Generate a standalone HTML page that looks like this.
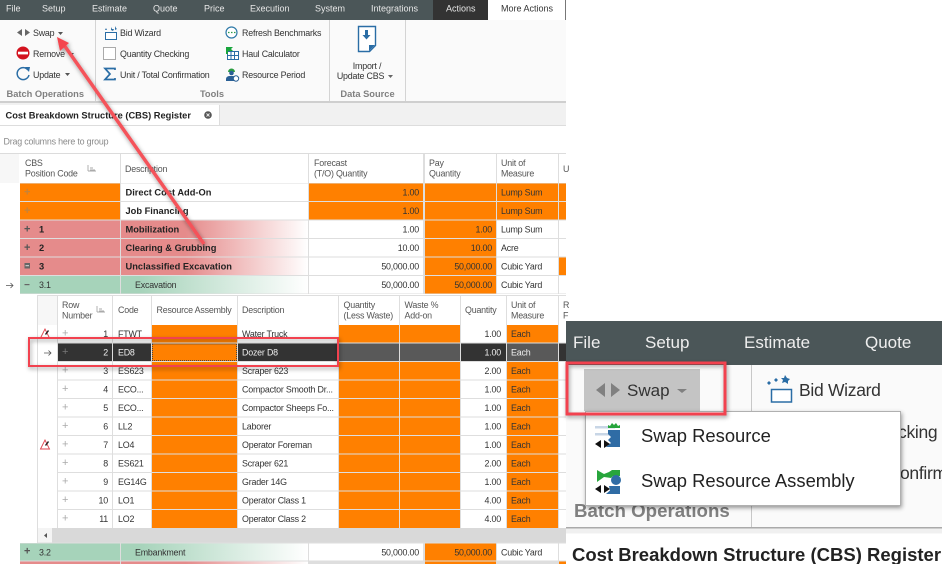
<!DOCTYPE html>
<html><head><meta charset="utf-8"><title>CBS Register</title>
<style>
html,body{margin:0;padding:0;background:#fff;width:942px;height:564px;overflow:hidden}
svg{display:block;position:absolute;left:0;top:0;filter:blur(.35px)}
text{font-family:"Liberation Sans",sans-serif;font-size:8.9px;letter-spacing:-.2px;fill:#333}
.t{fill:#e8e8e8;font-size:9px;letter-spacing:0}
.b{font-weight:bold;fill:#222;font-size:9.3px;letter-spacing:0}
.g{font-weight:bold;fill:#808080;font-size:9.3px;letter-spacing:0}
.h{fill:#555}
.e{text-anchor:end}
.m{text-anchor:middle}
.w{fill:#eee}
.p{fill:#aaa;font-size:11px;letter-spacing:0}
.d{fill:#555;font-size:11px;font-weight:bold;letter-spacing:0}
.i text{font-size:17px;letter-spacing:0}
</style></head><body>
<svg width="942" height="564" viewBox="0 0 942 564" xmlns="http://www.w3.org/2000/svg">
<defs>
<linearGradient id="rg" gradientUnits="userSpaceOnUse" x1="120" x2="308" y1="0" y2="0"><stop offset=".35" stop-color="#e58b8b"/><stop offset="1" stop-color="#fff"/></linearGradient>
<linearGradient id="gg" gradientUnits="userSpaceOnUse" x1="120" x2="308" y1="0" y2="0"><stop offset=".1" stop-color="#a6d3ba"/><stop offset="1" stop-color="#fff"/></linearGradient>
<filter id="sh" x="-10%" y="-20%" width="125%" height="150%"><feDropShadow dx="1" dy="2" stdDeviation="2" flood-color="#000" flood-opacity=".4"/></filter>
</defs>
<rect width="942" height="564" fill="#fff"/>

<!-- left: top bar -->
<rect x="0" y="0" width="565" height="20" fill="#4b5658"/>
<rect x="433" y="0" width="55" height="20" fill="#333"/>
<rect x="488" y="0" width="77" height="20" fill="#fff"/>
<rect x="565" y="0" width="1" height="20" fill="#777"/>
<text class="t" x="6" y="11.5">File</text>
<text class="t" x="42" y="11.5">Setup</text>
<text class="t" x="92" y="11.5">Estimate</text>
<text class="t" x="153" y="11.5">Quote</text>
<text class="t" x="204" y="11.5">Price</text>
<text class="t" x="250" y="11.5">Execution</text>
<text class="t" x="315" y="11.5">System</text>
<text class="t" x="371" y="11.5">Integrations</text>
<text class="t" x="446" y="11.5">Actions</text>
<text x="501" y="11.5" style="font-size:9px;letter-spacing:0">More Actions</text>

<!-- ribbon -->
<rect x="0" y="20" width="566" height="81" fill="#fafafa"/>
<rect x="0" y="101" width="566" height="2" fill="#cfcfcf"/>
<rect x="95" y="20" width="1" height="81" fill="#d4d4d4"/>
<rect x="329" y="20" width="1" height="81" fill="#d4d4d4"/>
<rect x="405" y="20" width="1" height="81" fill="#d4d4d4"/>
<path d="M22 29v7l-5-3.500zM25 29v7l5-3.500z" fill="#666"/>
<text x="33" y="36">Swap</text><path d="M58 32h5l-2.500 3z" fill="#555"/>
<circle cx="23" cy="53" r="6.500" fill="#d3121e"/><rect x="18" y="51.700" width="10" height="2.700" fill="#fff"/>
<text x="33" y="57">Remove</text><path d="M69 53h5l-2.500 3z" fill="#555"/>
<path d="M28 70a6 6 0 1 0 1 5" fill="none" stroke="#2a6da5" stroke-width="1.500"/><path d="M25 67l5 0-1 5z" fill="#2a6da5"/>
<text x="33" y="78">Update</text><path d="M65 73h5l-2.500 3z" fill="#555"/>
<text class="g" x="6.500" y="97">Batch Operations</text>
<rect x="105.500" y="32.500" width="11" height="7" fill="#fff" stroke="#2a6da5"/>
<path d="M106 28l1 2-2 0zM111 27l1 2 2 0-1 2-2-1zM115 26l1 2 1 1-2 1z" fill="#2a6da5"/>
<text x="120" y="36">Bid Wizard</text>
<rect x="103.500" y="47.500" width="12" height="12" fill="#fff" stroke="#aaa"/>
<text x="120" y="57">Quantity Checking</text>
<path d="M115 70v-1.500h-10l5 5.500-5 5.500h10v-1.500" fill="none" stroke="#2a6da5" stroke-width="1.700"/>
<text x="120" y="78">Unit / Total Confirmation</text>
<text class="g m" x="212" y="97">Tools</text>
<circle cx="231.500" cy="32.500" r="5.500" fill="#fff" stroke="#2f7aa8" stroke-width="1.200"/>
<path d="M228 32.500h1.500M231 32.500h1.500M234 32.500h1.500" stroke="#2c9c4a" stroke-width="1.200"/>
<text x="242" y="36">Refresh Benchmarks</text>
<rect x="227.500" y="51.500" width="11" height="8" fill="#fff" stroke="#2a6da5"/>
<path d="M231 52v7M234.500 52v7M228 55.500h10" stroke="#2a6da5"/>
<path d="M226 47h7l-2 2 2 2h-5v3h-2z" fill="#18a53c"/>
<text x="242" y="57">Haul Calculator</text>
<path d="M228 72a3.500 3.500 0 0 1 7 0z" fill="#2a9c3f"/><circle cx="231.500" cy="73" r="2.300" fill="#295f95"/>
<path d="M226 81v-2a3.500 3 0 0 1 3-3h4a3 3 0 0 1 3 3v2z" fill="#295f95"/>
<circle cx="236" cy="78.500" r="2.700" fill="#fff" stroke="#295f95"/>
<text x="242" y="78">Resource Period</text>
<path d="M358.500 26.500h17v19l-6 6h-11z" fill="#fff" stroke="#2a6da5" stroke-width="1.400"/>
<path d="M375 45l-6 6v-6z" fill="#2a6da5"/>
<path d="M365 30h3v5h2.500l-4 4.500-4-4.500h2.500z" fill="#2a6da5"/>
<text class="m" x="367" y="69">Import /</text>
<text class="m" x="360.500" y="79">Update CBS</text><path d="M388 75h5l-2.500 3z" fill="#666"/>
<text class="g m" x="367.500" y="97">Data Source</text>

<!-- tab strip -->
<rect x="0" y="103" width="566" height="22" fill="#f1f1f1"/>
<rect x="0" y="105" width="219" height="20" fill="#fff"/><rect x="219" y="105" width="1" height="20" fill="#ddd"/>
<text class="b" x="5.500" y="118.500">Cost Breakdown Structure (CBS) Register</text>
<circle cx="208" cy="115" r="3.800" fill="#555"/><path d="M206.500 113.500l3 3M209.500 113.500l-3 3" stroke="#eee" stroke-width=".9"/>
<rect x="0" y="125" width="566" height="1" fill="#ddd"/>
<text x="3.500" y="144.500" style="fill:#8a8a8a">Drag columns here to group</text>

<!-- main grid -->
<rect x="0" y="153" width="566" height="1" fill="#dcdcdc"/>
<rect x="20" y="154" width="546" height="410" fill="#dedede"/>
<rect x="0" y="154" width="19" height="410" fill="#fff"/>
<rect x="0" y="154" width="19" height="29" fill="#f7f7f7"/>
<rect x="20" y="154" width="100" height="29" fill="#fff"/>
<rect x="121" y="154" width="187" height="29" fill="#fff"/>
<rect x="309" y="154" width="114" height="29" fill="#fff"/>
<rect x="425" y="154" width="71" height="29" fill="#fff"/>
<rect x="497" y="154" width="61" height="29" fill="#fff"/>
<rect x="559" y="154" width="7" height="29" fill="#fff"/>
<text class="h" x="25" y="166">CBS</text><text class="h" x="25" y="176.500">Position Code</text>
<path d="M88 165v6M88 171h8M90 168h3M90 170h5" stroke="#aaa" stroke-width=".9"/>
<text class="h" x="125" y="172">Description</text>
<text class="h" x="314" y="166">Forecast</text><text class="h" x="314" y="176.500">(T/O) Quantity</text>
<text class="h" x="429" y="166">Pay</text><text class="h" x="429" y="176.500">Quantity</text>
<text class="h" x="501" y="166">Unit of</text><text class="h" x="501" y="176.500">Measure</text>
<text class="h" x="563" y="172">U</text>

<g transform="translate(0,183.500)">
<rect x="20" width="100" height="17.500" fill="#ff8000"/><rect x="121" width="187" height="17.500" fill="#fff"/><rect x="309" width="114" height="17.500" fill="#ff8000"/><rect x="425" width="71" height="17.500" fill="#ff8000"/><rect x="497" width="61" height="17.500" fill="#ff8000"/><rect x="559" width="7" height="17.500" fill="#ff8000"/>
<text class="d" x="24" y="12" style="fill:#c4833a">+</text><text class="b" x="125.500" y="12">Direct Cost Add-On</text><text class="e" x="419" y="12">1.00</text><text x="501" y="12">Lump Sum</text></g>
<g transform="translate(0,202)">
<rect x="20" width="100" height="17.500" fill="#ff8000"/><rect x="121" width="187" height="17.500" fill="#fff"/><rect x="309" width="114" height="17.500" fill="#ff8000"/><rect x="425" width="71" height="17.500" fill="#ff8000"/><rect x="497" width="61" height="17.500" fill="#ff8000"/><rect x="559" width="7" height="17.500" fill="#ff8000"/>
<text class="d" x="24" y="12" style="fill:#c4833a">+</text><text class="b" x="125.500" y="12">Job Financing</text><text class="e" x="419" y="12">1.00</text><text x="501" y="12">Lump Sum</text></g>
<g transform="translate(0,220.500)">
<rect x="20" width="100" height="17.500" fill="#e58b8b"/><rect x="121" width="187" height="17.500" fill="url(#rg)"/><rect x="309" width="114" height="17.500" fill="#fff"/><rect x="425" width="71" height="17.500" fill="#ff8000"/><rect x="497" width="61" height="17.500" fill="#fff"/><rect x="559" width="7" height="17.500" fill="#fff"/>
<text class="d" x="24" y="12">+</text><text class="b" x="39" y="12">1</text><text class="b" x="125.500" y="12">Mobilization</text><text class="e" x="419" y="12">1.00</text><text class="e" x="492" y="12">1.00</text><text x="501" y="12">Lump Sum</text></g>
<g transform="translate(0,239)">
<rect x="20" width="100" height="17.500" fill="#e58b8b"/><rect x="121" width="187" height="17.500" fill="url(#rg)"/><rect x="309" width="114" height="17.500" fill="#fff"/><rect x="425" width="71" height="17.500" fill="#ff8000"/><rect x="497" width="61" height="17.500" fill="#fff"/><rect x="559" width="7" height="17.500" fill="#fff"/>
<text class="d" x="24" y="12">+</text><text class="b" x="39" y="12">2</text><text class="b" x="125.500" y="12">Clearing &amp; Grubbing</text><text class="e" x="419" y="12">10.00</text><text class="e" x="492" y="12">10.00</text><text x="501" y="12">Acre</text></g>
<g transform="translate(0,257.500)">
<rect x="20" width="100" height="17.500" fill="#e58b8b"/><rect x="121" width="187" height="17.500" fill="url(#rg)"/><rect x="309" width="114" height="17.500" fill="#fff"/><rect x="425" width="71" height="17.500" fill="#ff8000"/><rect x="497" width="61" height="17.500" fill="#fff"/><rect x="559" width="7" height="17.500" fill="#ff8000"/>
<rect x="24.500" y="5.500" width="5.500" height="5.500" fill="#666"/><rect x="25.500" y="7.700" width="3.500" height="1" fill="#ddd"/>
<text class="b" x="39" y="12">3</text><text class="b" x="125.500" y="12">Unclassified Excavation</text><text class="e" x="419" y="12">50,000.00</text><text class="e" x="492" y="12">50,000.00</text><text x="501" y="12">Cubic Yard</text></g>
<g transform="translate(0,276)">
<path d="M6 9.500h7M10.500 7l2.500 2.500-2.500 2.500" fill="none" stroke="#555" stroke-width=".8"/>
<rect x="20" width="100" height="17.500" fill="#a6d3ba"/><rect x="121" width="187" height="17.500" fill="url(#gg)"/><rect x="309" width="114" height="17.500" fill="#fff"/><rect x="425" width="71" height="17.500" fill="#ff8000"/><rect x="497" width="61" height="17.500" fill="#fff"/><rect x="559" width="7" height="17.500" fill="#fff"/>
<rect x="24.500" y="8" width="5" height="1.200" fill="#666"/>
<text x="39" y="12">3.1</text><text x="135" y="12">Excavation</text><text class="e" x="419" y="12">50,000.00</text><text class="e" x="492" y="12">50,000.00</text><text x="501" y="12">Cubic Yard</text></g>

<!-- detail grid -->
<rect x="20" y="294" width="546" height="249" fill="#fff"/>
<rect x="37" y="295" width="529" height="248" fill="#dedede"/>
<rect x="38" y="296" width="19" height="232" fill="#fff"/>
<rect x="38" y="296" width="19" height="29" fill="#f7f7f7"/>
<rect x="58" y="296" width="54" height="29" fill="#fff"/>
<rect x="113" y="296" width="38" height="29" fill="#fff"/>
<rect x="152" y="296" width="85" height="29" fill="#fff"/>
<rect x="238" y="296" width="100" height="29" fill="#fff"/>
<rect x="339" y="296" width="60" height="29" fill="#fff"/>
<rect x="400" y="296" width="60" height="29" fill="#fff"/>
<rect x="461" y="296" width="45" height="29" fill="#fff"/>
<rect x="507" y="296" width="51" height="29" fill="#fff"/>
<rect x="559" y="296" width="7" height="29" fill="#fff"/>
<text class="h" x="62" y="308">Row</text><text class="h" x="62" y="318.500">Number</text>
<path d="M97 306v6M97 312h8M99 309h3M99 311h5" stroke="#aaa" stroke-width=".9"/>
<text class="h" x="118" y="313">Code</text>
<text class="h" x="156.500" y="313">Resource Assembly</text>
<text class="h" x="242" y="313">Description</text>
<text class="h" x="343.500" y="308">Quantity</text><text class="h" x="343.500" y="318.500">(Less Waste)</text>
<text class="h" x="404.500" y="308">Waste %</text><text class="h" x="404.500" y="318.500">Add-on</text>
<text class="h" x="465" y="313">Quantity</text>
<text class="h" x="511" y="308">Unit of</text><text class="h" x="511" y="318.500">Measure</text>
<text class="h" x="563" y="308">R</text><text class="h" x="563" y="318.500">F</text>

<g transform="translate(0,325)">
<rect x="58" width="54" height="17.500" fill="#fff"/><rect x="113" width="38" height="17.500" fill="#fff"/><rect x="152" width="85" height="17.500" fill="#ff8000"/><rect x="238" width="100" height="17.500" fill="#fff"/><rect x="339" width="60" height="17.500" fill="#ff8000"/><rect x="400" width="60" height="17.500" fill="#ff8000"/><rect x="461" width="45" height="17.500" fill="#fff"/><rect x="507" width="51" height="17.500" fill="#ff8000"/><rect x="559" width="7" height="17.500" fill="#fff"/>
<text class="p" x="62" y="11.500">+</text><text class="e" x="108" y="12">1</text><text x="118" y="12">FTWT</text><text x="242" y="12">Water Truck</text><text class="e" x="501" y="12">1.00</text><text x="511" y="12">Each</text>
<path d="M40.500 13l4.500-9 4.500 9z" fill="#fff" stroke="#e0434d" stroke-width=".9"/><path d="M45 9l3-4 1 1-3 4z" fill="#222"/></g>
<g transform="translate(0,343.500)">
<rect x="58" width="54" height="17.500" fill="#333"/><rect x="113" width="38" height="17.500" fill="#333"/><rect x="152" width="85" height="17.500" fill="#ff8000"/><rect x="152.500" y=".5" width="84" height="16.500" fill="none" stroke="#444" stroke-dasharray="1 1"/><rect x="238" width="100" height="17.500" fill="#333"/><rect x="339" width="60" height="17.500" fill="#595959"/><rect x="400" width="60" height="17.500" fill="#595959"/><rect x="461" width="45" height="17.500" fill="#333"/><rect x="507" width="51" height="17.500" fill="#595959"/><rect x="559" width="7" height="17.500" fill="#333"/>
<path d="M44 9.500h7M48.500 7l2.500 2.500-2.500 2.500" fill="none" stroke="#555" stroke-width=".8"/>
<text class="p" x="62" y="11.500" style="fill:#777">+</text><text class="e w" x="108" y="12">2</text><text class="w" x="118" y="12">ED8</text><text class="w" x="242" y="12">Dozer D8</text><text class="e w" x="501" y="12">1.00</text><text class="w" x="511" y="12">Each</text></g>
<g transform="translate(0,362)">
<rect x="58" width="54" height="17.500" fill="#fff"/><rect x="113" width="38" height="17.500" fill="#fff"/><rect x="152" width="85" height="17.500" fill="#ff8000"/><rect x="238" width="100" height="17.500" fill="#fff"/><rect x="339" width="60" height="17.500" fill="#ff8000"/><rect x="400" width="60" height="17.500" fill="#ff8000"/><rect x="461" width="45" height="17.500" fill="#fff"/><rect x="507" width="51" height="17.500" fill="#ff8000"/><rect x="559" width="7" height="17.500" fill="#fff"/>
<text class="p" x="62" y="11.500">+</text><text class="e" x="108" y="12">3</text><text x="118" y="12">ES623</text><text x="242" y="12">Scraper 623</text><text class="e" x="501" y="12">2.00</text><text x="511" y="12">Each</text></g>
<g transform="translate(0,380.500)">
<rect x="58" width="54" height="17.500" fill="#fff"/><rect x="113" width="38" height="17.500" fill="#fff"/><rect x="152" width="85" height="17.500" fill="#ff8000"/><rect x="238" width="100" height="17.500" fill="#fff"/><rect x="339" width="60" height="17.500" fill="#ff8000"/><rect x="400" width="60" height="17.500" fill="#ff8000"/><rect x="461" width="45" height="17.500" fill="#fff"/><rect x="507" width="51" height="17.500" fill="#ff8000"/><rect x="559" width="7" height="17.500" fill="#fff"/>
<text class="p" x="62" y="11.500">+</text><text class="e" x="108" y="12">4</text><text x="118" y="12">ECO...</text><text x="242" y="12">Compactor Smooth Dr...</text><text class="e" x="501" y="12">1.00</text><text x="511" y="12">Each</text></g>
<g transform="translate(0,399)">
<rect x="58" width="54" height="17.500" fill="#fff"/><rect x="113" width="38" height="17.500" fill="#fff"/><rect x="152" width="85" height="17.500" fill="#ff8000"/><rect x="238" width="100" height="17.500" fill="#fff"/><rect x="339" width="60" height="17.500" fill="#ff8000"/><rect x="400" width="60" height="17.500" fill="#ff8000"/><rect x="461" width="45" height="17.500" fill="#fff"/><rect x="507" width="51" height="17.500" fill="#ff8000"/><rect x="559" width="7" height="17.500" fill="#fff"/>
<text class="p" x="62" y="11.500">+</text><text class="e" x="108" y="12">5</text><text x="118" y="12">ECO...</text><text x="242" y="12">Compactor Sheeps Fo...</text><text class="e" x="501" y="12">1.00</text><text x="511" y="12">Each</text></g>
<g transform="translate(0,417.500)">
<rect x="58" width="54" height="17.500" fill="#fff"/><rect x="113" width="38" height="17.500" fill="#fff"/><rect x="152" width="85" height="17.500" fill="#ff8000"/><rect x="238" width="100" height="17.500" fill="#fff"/><rect x="339" width="60" height="17.500" fill="#ff8000"/><rect x="400" width="60" height="17.500" fill="#ff8000"/><rect x="461" width="45" height="17.500" fill="#fff"/><rect x="507" width="51" height="17.500" fill="#ff8000"/><rect x="559" width="7" height="17.500" fill="#fff"/>
<text class="p" x="62" y="11.500">+</text><text class="e" x="108" y="12">6</text><text x="118" y="12">LL2</text><text x="242" y="12">Laborer</text><text class="e" x="501" y="12">1.00</text><text x="511" y="12">Each</text></g>
<g transform="translate(0,436)">
<rect x="58" width="54" height="17.500" fill="#fff"/><rect x="113" width="38" height="17.500" fill="#fff"/><rect x="152" width="85" height="17.500" fill="#ff8000"/><rect x="238" width="100" height="17.500" fill="#fff"/><rect x="339" width="60" height="17.500" fill="#ff8000"/><rect x="400" width="60" height="17.500" fill="#ff8000"/><rect x="461" width="45" height="17.500" fill="#fff"/><rect x="507" width="51" height="17.500" fill="#ff8000"/><rect x="559" width="7" height="17.500" fill="#fff"/>
<text class="p" x="62" y="11.500">+</text><text class="e" x="108" y="12">7</text><text x="118" y="12">LO4</text><text x="242" y="12">Operator Foreman</text><text class="e" x="501" y="12">1.00</text><text x="511" y="12">Each</text>
<path d="M40.500 13l4.500-9 4.500 9z" fill="#fff" stroke="#e0434d" stroke-width=".9"/><path d="M45 9l3-4 1 1-3 4z" fill="#222"/></g>
<g transform="translate(0,454.500)">
<rect x="58" width="54" height="17.500" fill="#fff"/><rect x="113" width="38" height="17.500" fill="#fff"/><rect x="152" width="85" height="17.500" fill="#ff8000"/><rect x="238" width="100" height="17.500" fill="#fff"/><rect x="339" width="60" height="17.500" fill="#ff8000"/><rect x="400" width="60" height="17.500" fill="#ff8000"/><rect x="461" width="45" height="17.500" fill="#fff"/><rect x="507" width="51" height="17.500" fill="#ff8000"/><rect x="559" width="7" height="17.500" fill="#fff"/>
<text class="p" x="62" y="11.500">+</text><text class="e" x="108" y="12">8</text><text x="118" y="12">ES621</text><text x="242" y="12">Scraper 621</text><text class="e" x="501" y="12">2.00</text><text x="511" y="12">Each</text></g>
<g transform="translate(0,473)">
<rect x="58" width="54" height="17.500" fill="#fff"/><rect x="113" width="38" height="17.500" fill="#fff"/><rect x="152" width="85" height="17.500" fill="#ff8000"/><rect x="238" width="100" height="17.500" fill="#fff"/><rect x="339" width="60" height="17.500" fill="#ff8000"/><rect x="400" width="60" height="17.500" fill="#ff8000"/><rect x="461" width="45" height="17.500" fill="#fff"/><rect x="507" width="51" height="17.500" fill="#ff8000"/><rect x="559" width="7" height="17.500" fill="#fff"/>
<text class="p" x="62" y="11.500">+</text><text class="e" x="108" y="12">9</text><text x="118" y="12">EG14G</text><text x="242" y="12">Grader 14G</text><text class="e" x="501" y="12">1.00</text><text x="511" y="12">Each</text></g>
<g transform="translate(0,491.500)">
<rect x="58" width="54" height="17.500" fill="#fff"/><rect x="113" width="38" height="17.500" fill="#fff"/><rect x="152" width="85" height="17.500" fill="#ff8000"/><rect x="238" width="100" height="17.500" fill="#fff"/><rect x="339" width="60" height="17.500" fill="#ff8000"/><rect x="400" width="60" height="17.500" fill="#ff8000"/><rect x="461" width="45" height="17.500" fill="#fff"/><rect x="507" width="51" height="17.500" fill="#ff8000"/><rect x="559" width="7" height="17.500" fill="#fff"/>
<text class="p" x="62" y="11.500">+</text><text class="e" x="108" y="12">10</text><text x="118" y="12">LO1</text><text x="242" y="12">Operator Class 1</text><text class="e" x="501" y="12">4.00</text><text x="511" y="12">Each</text></g>
<g transform="translate(0,510)">
<rect x="58" width="54" height="18" fill="#fff"/><rect x="113" width="38" height="18" fill="#fff"/><rect x="152" width="85" height="18" fill="#ff8000"/><rect x="238" width="100" height="18" fill="#fff"/><rect x="339" width="60" height="18" fill="#ff8000"/><rect x="400" width="60" height="18" fill="#ff8000"/><rect x="461" width="45" height="18" fill="#fff"/><rect x="507" width="51" height="18" fill="#ff8000"/><rect x="559" width="7" height="18" fill="#fff"/>
<text class="p" x="62" y="11.500">+</text><text class="e" x="108" y="12">11</text><text x="118" y="12">LO2</text><text x="242" y="12">Operator Class 2</text><text class="e" x="501" y="12">4.00</text><text x="511" y="12">Each</text></g>
<rect x="38" y="528" width="528" height="14.500" fill="#d9d9d9"/><rect x="38" y="528" width="14" height="14.500" fill="#f4f4f4"/>
<path d="M47 533v5l-3-2.500z" fill="#555"/>

<g transform="translate(0,543.500)">
<rect x="20" width="100" height="17" fill="#a6d3ba"/><rect x="121" width="187" height="17" fill="url(#gg)"/><rect x="309" width="114" height="17" fill="#fff"/><rect x="425" width="71" height="17" fill="#ff8000"/><rect x="497" width="61" height="17" fill="#fff"/><rect x="559" width="7" height="17" fill="#fff"/>
<text class="d" x="24" y="11">+</text><text x="39" y="12">3.2</text><text x="135" y="12">Embankment</text><text class="e" x="419" y="12">50,000.00</text><text class="e" x="492" y="12">50,000.00</text><text x="501" y="12">Cubic Yard</text></g>
<rect x="20" y="561.500" width="100" height="2.500" fill="#e58b8b"/><rect x="121" y="561.500" width="187" height="2.500" fill="url(#rg)"/><rect x="425" y="561.500" width="71" height="2.500" fill="#ff8000"/><rect x="559" y="561.500" width="7" height="2.500" fill="#ff8000"/>

<!-- red highlight + arrow -->
<rect x="29" y="338" width="309" height="28" fill="none" stroke="#f2434f" stroke-width="2" filter="url(#sh)"/>
<g filter="url(#sh)"><path d="M64 45L204 244" stroke="#f4525a" stroke-width="3.500" fill="none"/><path d="M57 37L69 43 60 51z" fill="#f4444e"/></g>

<!-- inset -->
<g class="i">
<rect x="566" y="321" width="376" height="243" fill="#fff"/>
<rect x="566" y="321" width="376" height="44" fill="#4b5658"/>
<text class="w" x="573" y="348">File</text>
<text class="w" x="645" y="348">Setup</text>
<text class="w" x="744" y="348">Estimate</text>
<text class="w" x="865" y="348">Quote</text>
<rect x="566" y="365" width="376" height="162" fill="#fafafa"/>
<rect x="751" y="365" width="1" height="162" fill="#c8c8c8"/>
<rect x="566" y="527" width="376" height="1.500" fill="#aaa"/>
<rect x="566" y="528.500" width="376" height="5" fill="#f0f0f0"/>
<rect x="584" y="369" width="116" height="42" fill="#c4c4c4"/>
<path d="M605 383v14l-9-7zM611 383v14l9-7z" fill="#808080"/>
<text x="627" y="396" style="fill:#333;font-size:17px">Swap</text>
<path d="M677 389h10l-5 4z" fill="#808080"/>
<rect x="771.500" y="389.500" width="20" height="12.500" fill="#fff" stroke="#2a6da5" stroke-width="1.500"/>
<path d="M769 381l2 2-2 2-2-2zM776 378l2 2-2 2-2-2zM785 375l2 3 3 1-2 2 0 3-3-2-3 1 1-3-2-2 3 0z" fill="#2a6da5"/>
<text x="799" y="396" style="font-size:17.500px;letter-spacing:-.3px">Bid Wizard</text>
<text x="898" y="438" style="font-size:17.500px;letter-spacing:-.3px">cking</text>
<text x="900" y="479" style="font-size:17.500px;letter-spacing:-.3px">onfirm</text>
<text class="g" x="574" y="517" style="font-size:18.700px">Batch Operations</text>
<rect x="585.500" y="411.500" width="315" height="94" fill="#fff" stroke="#b0b0b0" filter="url(#sh)"/>
<rect x="595" y="426" width="20" height="2.500" fill="#c8d6e6"/><rect x="595" y="433" width="20" height="2.500" fill="#c8d6e6"/>
<path d="M608 428v-3l2 1 2-3 2 2 2-2 2 3 2-1v3z" fill="#27a53c"/>
<path d="M608 430h12v17h-14l5-4-3-3 3-3-3-3z" fill="#2f6ca5"/>
<path d="M601 440v8l-6-4zM604 440v8l6-4z" fill="#111"/>
<text x="641" y="442" style="font-size:18.400px;fill:#222">Swap Resource</text>
<path d="M597 470l7 4 5-2 3-2 8 0v6h-7l-2 2-7-1-7 5z" fill="#27a53c"/>
<circle cx="616" cy="480" r="5" fill="#2f6ca5"/><path d="M609 486h11v8h-14l4-3.500z" fill="#2f6ca5"/>
<path d="M601 485v8l-6-4zM604 485v8l6-4z" fill="#111"/>
<text x="641" y="487" style="font-size:18.400px;fill:#222">Swap Resource Assembly</text>
<rect x="567" y="363" width="158" height="51" fill="none" stroke="#f2434f" stroke-width="3" filter="url(#sh)"/>
<text class="b" x="572" y="561" style="font-size:18.500px;fill:#222">Cost Breakdown Structure (CBS) Register</text>
</g>
</svg>
</body></html>
